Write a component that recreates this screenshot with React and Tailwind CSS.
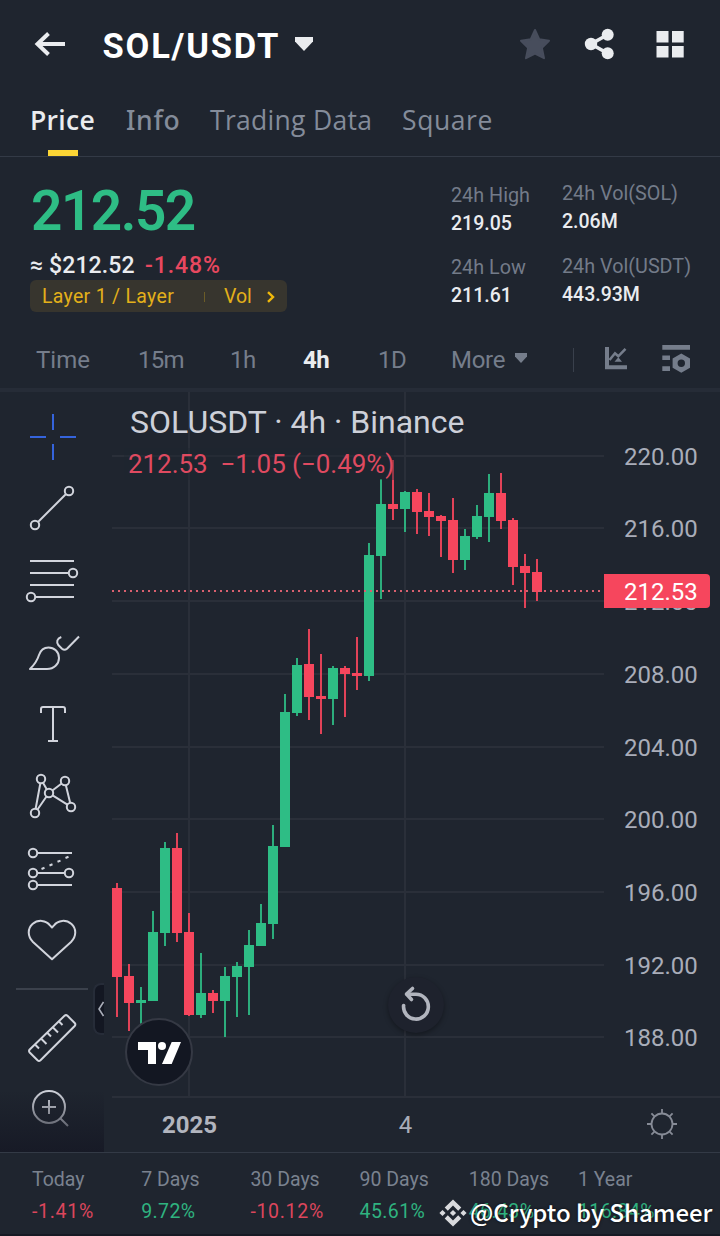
const UP = "#2ebd85";
const DOWN = "#f6465d";

// x centre, wick top, wick bottom, body top, body bottom, rising
const candles = [
  [117, 883, 1017, 888, 977, 0],
  [129, 964, 1031, 976, 1003, 0],
  [141, 987, 1026, 1000, 1003, 1],
  [153, 911, 1001, 932, 1001, 1],
  [165, 842, 946, 848, 933, 1],
  [177, 833, 942, 848, 933, 0],
  [189, 913, 1016, 932, 1015, 0],
  [201, 953, 1018, 993, 1015, 1],
  [213, 990, 1013, 993, 1001, 0],
  [225, 967, 1037, 976, 1001, 1],
  [237, 962, 1017, 966, 977, 1],
  [249, 930, 1015, 945, 967, 1],
  [261, 904, 946, 923, 946, 1],
  [273, 825, 939, 846, 924, 1],
  [285, 694, 847, 712, 847, 1],
  [297, 658, 716, 665, 713, 1],
  [309, 629, 720, 664, 697, 0],
  [321, 654, 734, 696, 699, 0],
  [333, 666, 725, 668, 699, 1],
  [345, 666, 717, 668, 674, 0],
  [357, 637, 690, 673, 676, 0],
  [369, 543, 681, 555, 676, 1],
  [381, 479, 599, 504, 556, 1],
  [393, 460, 520, 504, 509, 0],
  [405, 491, 532, 492, 509, 1],
  [417, 489, 534, 492, 512, 0],
  [429, 493, 536, 511, 517, 0],
  [441, 515, 557, 516, 521, 0],
  [453, 498, 573, 520, 560, 0],
  [465, 529, 570, 536, 560, 1],
  [477, 505, 539, 516, 537, 1],
  [489, 474, 542, 493, 517, 1],
  [501, 473, 529, 493, 521, 0],
  [513, 518, 585, 520, 567, 0],
  [525, 554, 608, 566, 573, 0],
  [537, 559, 601, 572, 592, 0],
];

const priceLines = [
  [456, "220.00"],
  [528, "216.00"],
  [601, "212.00"],
  [674, "208.00"],
  [747, "204.00"],
  [819, "200.00"],
  [892, "196.00"],
  [965, "192.00"],
  [1037, "188.00"],
];

function Header() {
  return (
    <header className="flex h-[92px] shrink-0 items-start">
      <svg className="mt-[30px] ml-[34px] h-7 w-8" viewBox="34 30 32 28" fill="none" stroke="#eaecef" strokeWidth="4">
        <path d="M65 44H38M48.5 33.5L37.5 44L48.5 54.5" />
      </svg>
      <h1 className="ml-[36.5px] w-[192.5px] font-[Roboto,sans-serif] text-[34.5px] leading-[92px] font-bold tracking-[1.8px] whitespace-nowrap text-white">
        SOL/USDT
      </h1>
      <svg className="mt-[37px] h-[14px] w-[18px]" viewBox="0 0 18 14" fill="#eaecef">
        <path d="M0 0H18V4.5L9 14L0 4.5Z" />
      </svg>
      <svg className="mt-[28px] ml-[206px] h-8 w-8" viewBox="519 28 32 32" fill="#474d5c" stroke="#474d5c" strokeWidth="2" strokeLinejoin="round">
        <path d="M535 30L539.2 39.2L549 40.7L541.9 47.9L544 58.2L535 53.6L526 58.2L528.1 47.9L521 40.7L530.8 39.2Z" />
      </svg>
      <svg className="mt-[28px] ml-[33px] h-8 w-8" viewBox="584 28 32 32" fill="#eaecef">
        <path d="M607.5 34.8L591 44L607.5 53.2" fill="none" stroke="#eaecef" strokeWidth="3.6" />
        <circle cx="591" cy="44" r="6.2" />
        <circle cx="607.7" cy="34.8" r="6" />
        <circle cx="607.7" cy="53.2" r="6" />
      </svg>
      <svg className="mt-[30px] ml-[40px] h-7 w-7" viewBox="656 30 28 28" fill="#eaecef">
        <path d="M656.5 31h12v11.5h-12zM672 31h11.7v11.5H672zM656.5 46h12v11.5h-12zM672 46h11.7v11.5H672z" />
      </svg>
    </header>
  );
}

function Tabs() {
  return (
    <nav className="flex h-[65px] shrink-0 border-b border-[#333a46] pl-[30px] font-['Open_Sans',sans-serif] text-[26.5px] leading-[57px] font-medium whitespace-nowrap text-[#848c9a]">
      <div className="relative w-[96px] font-semibold tracking-[0.3px] text-[#eaecef]">
        Price
        <span className="absolute top-[58px] left-[18px] h-[6px] w-[30px] bg-[#fcd535]" />
      </div>
      <div className="w-[84px] font-['Noto_Sans',sans-serif] tracking-[0.7px]">Info</div>
      <div className="w-[192px] tracking-[0.3px]">Trading Data</div>
      <div className="tracking-[0.6px]">Square</div>
    </nav>
  );
}

function Stat({ label, value }) {
  return (
    <div>
      <div className="text-[19.8px] text-[#737b89]">{label}</div>
      <div className="text-[19.5px] font-medium text-[#eaecef]">{value}</div>
    </div>
  );
}

function Summary() {
  return (
    <section className="flex h-[175px] shrink-0 pl-[30px] font-[Roboto,sans-serif] whitespace-nowrap">
      <div className="w-[421px]">
        <div className="mt-[21px] h-[67px] pl-[1px] text-[55px] leading-[67px] font-semibold tracking-[-1.5px] text-[#2ebd85]">212.52</div>
        <div className="flex h-[35px] text-[23px] leading-[42px] font-medium">
          <span className="w-[115px] tracking-[0.1px] text-[#eaecef]">≈ $212.52</span>
          <span className="tracking-[0.9px] text-[#e8485f]">-1.48%</span>
        </div>
        <div className="flex h-8 w-[257px] items-center rounded-[6px] bg-[#37352e] pt-px pl-3 text-[19.5px] text-[#e3b01a]">
          <span className="w-[162px] tracking-[0.3px]">Layer 1 / Layer</span>
          <span className="mr-[19px] h-2.5 w-px bg-[#6b5c27]" />
          <span className="w-[43px]">Vol</span>
          <svg className="h-3 w-2" viewBox="0 0 8 12" fill="none" stroke="#f0b90b" strokeWidth="2.4">
            <path d="M1 1.2L6 6L1 10.8" />
          </svg>
        </div>
      </div>
      <div className="flex w-[111px] flex-col gap-4 pt-[25px] leading-7">
        <Stat label="24h High" value="219.05" />
        <Stat label="24h Low" value="211.61" />
      </div>
      <div className="flex flex-col gap-[17px] pt-[23px] leading-7">
        <Stat label="24h Vol(SOL)" value="2.06M" />
        <Stat label="24h Vol(USDT)" value="443.93M" />
      </div>
    </section>
  );
}

function Timeframes() {
  return (
    <div className="flex h-14 shrink-0 items-center pl-9 font-[Roboto,sans-serif] text-[24px] leading-[56px] whitespace-nowrap text-[#757d8b]">
      <span className="w-[102px]">Time</span>
      <span className="w-[92px] tracking-[-0.8px]">15m</span>
      <span className="w-[73px] tracking-[-0.5px]">1h</span>
      <span className="w-[75px] font-bold tracking-[-0.4px] text-[#eaecef]">4h</span>
      <span className="w-[73px] tracking-[-0.5px]">1D</span>
      <span className="w-[64px] tracking-[-0.3px]">More</span>
      <svg className="mb-1 h-[10px] w-[12px]" viewBox="0 0 12 10" fill="#757d8b">
        <path d="M0 0H12V3.5L6 10L0 3.5Z" />
      </svg>
      <span className="ml-[46px] h-6 w-px bg-[#39404c]" />
      <svg className="mb-1 ml-[30px] h-6 w-6" viewBox="604 346 24 24" fill="none" stroke="#757d8b">
        <path d="M607 347V367.3H627" strokeWidth="4" />
        <path d="M609.5 360L615 353.3L618.3 356.3L625.5 348.8" strokeWidth="2.6" />
        <path d="M614.5 361.8L618.3 357.2L622 361.8Z" fill="#757d8b" stroke="none" />
      </svg>
      <svg className="mb-0.5 ml-[33px] h-7 w-[30px]" viewBox="661 345 30 28" fill="#757d8b">
        <path d="M662.3 345H690V349.8H662.3zM662.3 355.6H670V360H662.3zM662.3 366.2H670V371H662.3z" />
        <path fillRule="evenodd" d="M681.3 353.5L690 358.5V367.8L681.3 372.8L672.6 367.8V358.5ZM681.3 359.5A3.7 3.7 0 1 0 681.3 366.9A3.7 3.7 0 1 0 681.3 359.5Z" />
      </svg>
    </div>
  );
}

function Tool({ top, color = "#d1d4dc", children }) {
  return (
    <svg
      className="h-[72px] w-[72px] shrink-0"
      viewBox={`16 ${top} 72 72`}
      fill="none"
      stroke={color}
      strokeWidth="2"
      strokeLinejoin="round"
    >
      {children}
    </svg>
  );
}

function Toolbar() {
  return (
    <aside className="relative flex w-[104px] shrink-0 flex-col pt-[9px] pl-4">
      <Tool top={401} color="#3564dd">
        <path d="M53 414V430M53 444V460M30 437H46M60 437H76" />
      </Tool>
      <Tool top={473}>
        <circle cx="69" cy="491" r="4.2" />
        <circle cx="35" cy="525" r="4.2" />
        <path d="M38 522L66 494" />
      </Tool>
      <Tool top={545}>
        <path d="M30 561H74M30 573H69M30 585H74M35.5 597H74" />
        <circle cx="73" cy="573" r="4.2" />
        <circle cx="31" cy="597" r="4.2" />
      </Tool>
      <Tool top={617}>
        <path d="M30 669H47C54 669 59 664 59 658C59 651.5 54 647.5 48.5 647.5C43 647.5 40.5 650.5 39 655C37.3 660.5 34 665 30 669Z" />
        <path d="M61.3 637C57 638.5 56 642 58.5 645.3L62 648.8C63.7 650.2 65.3 650.2 67 648.8L79 636.5" />
      </Tool>
      <Tool top={689}>
        <path d="M41 713V709Q41 707 43 707H63Q65 707 65 709V713M53 707V741M48 741H58" />
      </Tool>
      <Tool top={761}>
        <path d="M40.4 783L35.6 809M43 782.7L47 789.7M52.4 790.5L61.6 783.5M65.8 785L70.2 803M52.6 795.3L67.4 804.7M46.5 796.5L37.5 809.5" />
        <circle cx="41" cy="779" r="4.2" />
        <circle cx="65" cy="781" r="4.2" />
        <circle cx="49" cy="793" r="4.2" />
        <circle cx="71" cy="807" r="4.2" />
        <circle cx="35" cy="813" r="4.2" />
      </Tool>
      <Tool top={833}>
        <circle cx="33" cy="853" r="4.2" />
        <circle cx="33" cy="873" r="4.2" />
        <circle cx="69" cy="873" r="4.2" />
        <circle cx="33" cy="885" r="4.2" />
        <path d="M37.5 853H72M37.5 873H64.5M37.5 885H72" />
        <path d="M41.5 869L44.5 867.8M49.5 865.5L52.5 864.3M57.5 861.8L60.5 860.6M65.5 858L68.5 856.8" />
      </Tool>
      <Tool top={905}>
        <path d="M52 959.3L33 942C27.3 936.3 27.5 928.5 32.5 924C38 919.3 46 920 50 925.3L52 927.5L54 925.3C58 920 66 919.3 71.5 924C76.5 928.5 76.7 936.3 71 942Z" />
      </Tool>
      <div className="mt-[11px] mb-3 h-[2px] w-[72px] shrink-0 bg-[#3b414c]" />
      <Tool top={1002}>
        <path d="M64.5 1015.8Q66 1014.5 67.5 1015.8L74.7 1023Q76 1024.5 74.7 1026L40.5 1060.3Q39 1061.6 37.5 1060.3L29.7 1052.5Q28.4 1051 29.7 1049.5Z" />
        <path d="M35 1044.5L39 1048.5M41 1038.5L46.5 1044M47 1032.5L51 1036.5M52.5 1027L58 1032.5M58.5 1021L62.5 1025" />
      </Tool>
      <Tool top={1074}>
        <circle cx="49" cy="1107" r="16" />
        <path d="M42 1107H56M49 1100V1114M60.5 1118.5L68 1126" />
      </Tool>
      <div className="absolute bottom-0 left-0 h-[62px] w-[104px] bg-linear-to-b from-[#171a26]/0 to-[#171a26]" />
      <div className="absolute top-[591px] right-0 flex h-[52px] w-[11px] items-center overflow-hidden rounded-l-[8px] border-2 border-r-0 border-[#262c38] bg-[#131722]">
        <svg className="ml-[3px] h-4 w-[6px]" viewBox="0 0 6 16" fill="none" stroke="#a9adb8" strokeWidth="1.6">
          <path d="M5.5 1L1 8L5.5 15" />
        </svg>
      </div>
    </aside>
  );
}

function Chart() {
  return (
    <div className="relative w-[616px]">
      <svg className="block h-[760px] w-[616px]" viewBox="104 392 616 760" fontFamily="Roboto, sans-serif">
        <g stroke="#2a2f39" strokeWidth="2">
          {priceLines.map(([y]) => (
            <path key={y} d={`M112 ${y}H604`} />
          ))}
          <path d="M189 392V1096M405 392V1096M112 1097H720" />
        </g>
        <g fontSize="24" fill="#a9adb9">
          {priceLines.map(([y, label]) => (
            <text key={y} x="624" y={y + 9}>{label}</text>
          ))}
          <text x="189.5" y="1133" textAnchor="middle" fontWeight="700" fill="#b2b5be">2025</text>
          <text x="405.5" y="1133" textAnchor="middle">4</text>
        </g>
        {candles.map(([x, high, low, top, bottom, rising]) => (
          <g key={x} fill={rising ? UP : DOWN}>
            <rect x={x - 1} y={high} width="2" height={low - high} opacity="0.9" />
            <rect x={x - 5} y={top} width="10" height={bottom - top} />
          </g>
        ))}
        <path d="M112 591H604" stroke="#d9606f" strokeWidth="2" strokeDasharray="2 4" />
        <path d="M604 574H706Q710 574 710 578V604Q710 608 706 608H604Z" fill={DOWN} />
        <text x="624" y="600" fontSize="24" fill="#fff">212.53</text>
        <g fill="none" stroke="#868b96" strokeWidth="1.8">
          <circle cx="662" cy="1124" r="10.5" />
          <path d="M662 1109V1113M662 1135V1139M647 1124H651M673 1124H677M651.4 1113.4L654.4 1116.4M669.6 1131.6L672.6 1134.6M651.4 1134.6L654.4 1131.6M669.6 1116.4L672.6 1113.4" />
        </g>
      </svg>
      <div className="absolute top-[12px] left-[26px] font-[Roboto,sans-serif] text-[32px] leading-9 whitespace-nowrap text-[#cdd0d9]">
        SOLUSDT · 4h · Binance
      </div>
      <div className="absolute top-[56px] left-[20px] bg-[#1f252f]/40 pl-1 font-[Roboto,sans-serif] text-[26px] leading-8 tracking-[-0.05px] whitespace-pre text-[#df4a60]">
        {"212.53  −1.05 (−0.49%)"}
      </div>
      <div className="absolute top-[585px] left-[284px] flex h-14 w-14 items-center justify-center rounded-full bg-[#1e222d] shadow-[0_2px_5px_rgba(0,0,0,0.35)]">
        <svg className="h-10 w-10" viewBox="396 985 40 40" fill="none" stroke="#b2b5be" strokeWidth="3.6" strokeLinecap="round" strokeLinejoin="round">
          <path d="M403.6 1005.5A12.4 12.4 0 1 0 416 994.3H407" />
          <path d="M412.5 988.5L406.5 994L411.5 999.5" />
        </svg>
      </div>
      <div className="absolute top-[626px] left-[21px] flex h-[68px] w-[68px] items-center justify-center rounded-full border-2 border-[#353944] bg-[#131722]">
        <svg className="h-[22px] w-[44px]" viewBox="137 1041 44 22" fill="#fff" overflow="visible">
          <path d="M138 1042H156V1064H148V1050H138ZM171.7 1042H181L171.7 1064H162Z" />
          <circle cx="162" cy="1046" r="4" />
        </svg>
      </div>
    </div>
  );
}

const periods = [
  ["Today", "-1.41%"],
  ["7 Days", "9.72%"],
  ["30 Days", "-10.12%"],
  ["90 Days", "45.61%"],
  ["180 Days", "46.43%"],
  ["1 Year", "116.84%"],
];

function Performance() {
  return (
    <footer className="relative flex h-[84px] shrink-0 border-t border-b-2 border-t-[#333a46] border-b-[#161a24] pt-[11px] pl-8 font-[Roboto,sans-serif] text-[19.5px] leading-8 whitespace-nowrap">
      {periods.map(([label, change]) => (
        <div key={label} className="w-[109.2px] shrink-0">
          <div className="text-[#7a828f]">{label}</div>
          <div className={change.startsWith("-") ? "tracking-[0.7px] text-[#dc465c]" : "tracking-[0.4px] text-[#2fb380]"}>{change}</div>
        </div>
      ))}
      <div className="absolute top-[41px] left-[439px] flex items-center gap-[3px] font-['Noto_Sans_CJK_SC',sans-serif] text-[24px] leading-9 font-medium text-white [text-shadow:0_0_3px_#000a]">
        <svg className="mt-0.5 h-[28px] w-[28px]" viewBox="-14 -14 28 28" fill="#d9dadd">
          <path d="M0 -13.6L8.3 -5.4L5.2 -2.3L0 -7.4L-5.2 -2.3L-8.3 -5.4ZM0 13.6L8.3 5.4L5.2 2.3L0 7.4L-5.2 2.3L-8.3 5.4ZM0 -3.1L3.1 0L0 3.1L-3.1 0ZM10.5 -3.1L13.6 0L10.5 3.1L7.4 0ZM-10.5 -3.1L-7.4 0L-10.5 3.1L-13.6 0Z" />
        </svg>
        <span>@Crypto by Shameer</span>
      </div>
    </footer>
  );
}

export default function App() {
  return (
    <div className="flex h-[1236px] w-[720px] flex-col overflow-hidden bg-[#1f252f]">
      <Header />
      <Tabs />
      <Summary />
      <Timeframes />
      <div className="h-1 shrink-0 bg-[#262c37]" />
      <main className="flex h-[760px] shrink-0">
        <Toolbar />
        <Chart />
      </main>
      <Performance />
    </div>
  );
}
